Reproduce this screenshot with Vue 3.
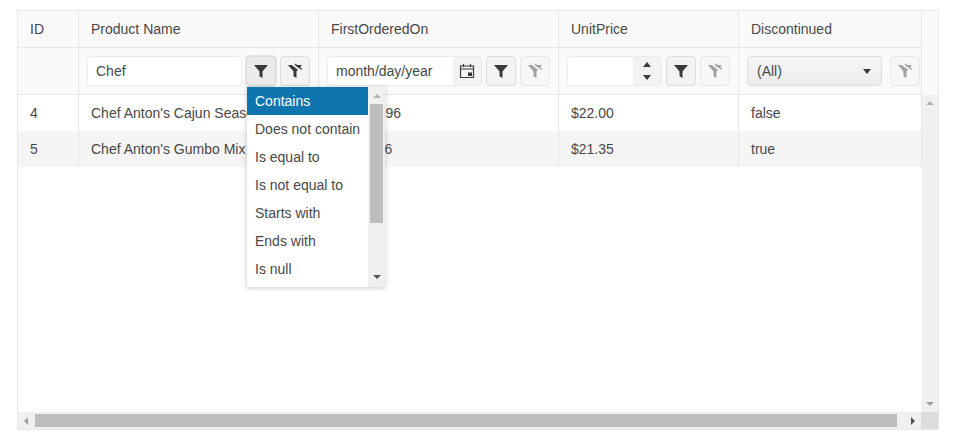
<script setup>
import { ref } from "vue";

const keyword = ref("Chef");
const dateMask = ref("month/day/year");
const price = ref("");

const rows = [
  { id: 4, name: "Chef Anton's Cajun Seasoning", date: "04/04/1996", price: "$22.00", discontinued: "false" },
  { id: 5, name: "Chef Anton's Gumbo Mix", date: "11/3/1996", price: "$21.35", discontinued: "true" },
];

const operators = ["Contains", "Does not contain", "Is equal to", "Is not equal to", "Starts with", "Ends with", "Is null"];
const filterPath = "M1 2h14l-5.500 6.500V15l-3-1.800V8.500z";
</script>

<template>
  <div class="grid">
    <div class="head">
      <div class="row">
        <div class="cell">ID</div>
        <div class="cell">Product Name</div>
        <div class="cell">FirstOrderedOn</div>
        <div class="cell">UnitPrice</div>
        <div class="cell">Discontinued</div>
      </div>
      <div class="row filters">
        <div class="cell"></div>
        <div class="cell tools">
          <input v-model="keyword" class="field text" />
          <button class="btn active">
            <svg viewBox="0 0 16 16" class="ico"><path :d="filterPath" /></svg>
          </button>
          <button class="btn">
            <svg viewBox="0 0 16 16" class="ico">
              <path :d="filterPath" />
              <path d="M4.500 0.500l10 8" class="gap" />
              <path d="M8 1l7 5.500" class="slash" />
            </svg>
          </button>
        </div>
        <div class="cell tools">
          <div class="group">
            <input v-model="dateMask" class="inner" />
            <span class="addon">
              <svg viewBox="0 0 16 16" class="cal">
                <path d="M1.500 3h13v11.500h-13z" class="cal-box" />
                <path d="M1.500 6h13" class="cal-box" />
                <path d="M4.500 1v3M11.500 1v3" class="cal-box" />
                <rect x="9" y="9.500" width="4" height="3.500" />
              </svg>
            </span>
          </div>
          <button class="btn">
            <svg viewBox="0 0 16 16" class="ico"><path :d="filterPath" /></svg>
          </button>
          <button class="btn off">
            <svg viewBox="0 0 16 16" class="ico">
              <path :d="filterPath" />
              <path d="M4.500 0.500l10 8" class="gap" />
              <path d="M8 1l7 5.500" class="slash" />
            </svg>
          </button>
        </div>
        <div class="cell tools">
          <div class="group num">
            <input v-model="price" class="inner" />
            <span class="spin">
              <i class="arrow up dark"></i>
              <i class="arrow down dark"></i>
            </span>
          </div>
          <button class="btn">
            <svg viewBox="0 0 16 16" class="ico"><path :d="filterPath" /></svg>
          </button>
          <button class="btn off">
            <svg viewBox="0 0 16 16" class="ico">
              <path :d="filterPath" />
              <path d="M4.500 0.500l10 8" class="gap" />
              <path d="M8 1l7 5.500" class="slash" />
            </svg>
          </button>
        </div>
        <div class="cell tools wide-gap">
          <div class="select">
            <span>(All)</span>
            <i class="arrow down dark big"></i>
          </div>
          <button class="btn off">
            <svg viewBox="0 0 16 16" class="ico">
              <path :d="filterPath" />
              <path d="M4.500 0.500l10 8" class="gap" />
              <path d="M8 1l7 5.500" class="slash" />
            </svg>
          </button>
        </div>
      </div>
    </div>

    <div class="middle">
      <div class="body">
        <div v-for="(item, i) in rows" :key="item.id" class="row data" :class="{ alt: i % 2 }">
          <div class="cell">{{ item.id }}</div>
          <div class="cell">{{ item.name }}</div>
          <div class="cell">{{ item.date }}</div>
          <div class="cell">{{ item.price }}</div>
          <div class="cell">{{ item.discontinued }}</div>
        </div>
      </div>
      <div class="vbar">
        <i class="arrow up light"></i>
        <i class="arrow down light"></i>
      </div>
    </div>

    <div class="hbar">
      <div class="htrack">
        <i class="arrow left"></i>
        <div class="hthumb"></div>
        <i class="arrow right"></i>
      </div>
      <div class="corner"></div>
    </div>

    <div class="menu">
      <ul>
        <li v-for="(op, i) in operators" :key="op" :class="{ selected: i === 0 }">{{ op }}</li>
      </ul>
      <div class="menu-bar">
        <i class="arrow up light"></i>
        <div class="menu-thumb"></div>
        <i class="arrow down mid"></i>
      </div>
    </div>
  </div>
</template>

<style>
body {
  background: #fff;
}
</style>

<style scoped>
.grid {
  position: relative;
  box-sizing: border-box;
  width: 922px;
  height: 420px;
  margin: 10px 0 0 17px;
  display: flex;
  flex-direction: column;
  border: 1px solid #e9e9e9;
  font: 14px/20px "Liberation Sans", Arial, sans-serif;
  color: #484848;
  background: #fff;
}
.head {
  background: #fafafa;
  width: 920px;
}
.row {
  display: grid;
  grid-template-columns: 61px 240px 240px 180px 183px;
  height: 37px;
  box-sizing: border-box;
  border-bottom: 1px solid #e7e7e7;
  width: 904px;
}
.row.filters {
  height: 47px;
}
.cell {
  box-sizing: border-box;
  border-right: 1px solid #e7e7e7;
  padding: 8px 12px;
  white-space: nowrap;
  overflow: hidden;
}
.tools {
  display: flex;
  gap: 4px;
  padding: 8px;
}
.wide-gap {
  gap: 8px;
  padding-right: 0;
}
.field,
.inner {
  box-sizing: border-box;
  font: inherit;
  color: inherit;
  outline: none;
  background: #fff;
  height: 30px;
}
.field {
  width: 155px;
  padding: 0 8px;
  border: 1px solid #ebebeb;
  border-radius: 4px;
}
.group {
  box-sizing: border-box;
  display: flex;
  width: 155px;
  height: 30px;
  border: 1px solid #ebebeb;
  border-radius: 4px;
  overflow: hidden;
  background: #f3f3f3;
}
.group.num {
  width: 95px;
}
.inner {
  border: 0;
  height: 28px;
  padding: 0 8px;
  width: 125px;
  min-width: 0;
}
.num .inner {
  width: 65px;
}
.addon {
  flex: 1;
  display: flex;
  align-items: center;
  justify-content: center;
}
.cal {
  width: 16px;
  height: 16px;
  fill: #333;
}
.cal-box {
  fill: none;
  stroke: #3d3d3d;
  stroke-width: 1.200;
}
.spin {
  flex: 1;
  display: flex;
  flex-direction: column;
  align-items: center;
  justify-content: center;
  gap: 8px;
}
.btn {
  box-sizing: border-box;
  flex: none;
  width: 30px;
  height: 30px;
  padding: 0;
  display: flex;
  align-items: center;
  justify-content: center;
  background: #f3f3f3;
  border: 1px solid #dcdcdc;
  border-radius: 4px;
}
.btn.active {
  background: #ebebeb;
  box-shadow: 0 0 0 1px #e4e4e4;
}
.btn.off {
  background: #f7f7f7;
  border-color: #e8e8e8;
}
.ico {
  width: 16px;
  height: 16px;
  fill: #3a3a3a;
}
.gap {
  fill: none;
  stroke: #f3f3f3;
  stroke-width: 1.800;
}
.slash {
  fill: none;
  stroke: #3a3a3a;
  stroke-width: 1.100;
}
.off .ico {
  fill: #a2a2a2;
}
.off .gap {
  stroke: #f7f7f7;
}
.off .slash {
  stroke: #a2a2a2;
}
.select {
  box-sizing: border-box;
  flex: none;
  width: 135px;
  height: 30px;
  padding: 0 10px 0 9px;
  display: flex;
  align-items: center;
  justify-content: space-between;
  border: 1px solid #dedede;
  border-radius: 4px;
  background: linear-gradient(#f6f6f6, #ececec);
}
.middle {
  flex: 1;
  display: flex;
  min-height: 0;
}
.body {
  width: 904px;
}
.data {
  height: 36px;
  border-bottom: 0;
}
.data.alt {
  background: #f5f5f5;
}
.vbar {
  width: 16px;
  background: #f0f0f0;
  display: flex;
  flex-direction: column;
  align-items: center;
  justify-content: space-between;
  padding: 6px 0;
  box-sizing: border-box;
}
.hbar {
  display: flex;
  flex: none;
  height: 17px;
}
.htrack {
  width: 903px;
  background: #f0f0f0;
  display: flex;
  align-items: center;
  padding-left: 6px;
  box-sizing: border-box;
}
.hthumb {
  width: 862px;
  height: 13px;
  margin: 0 14px 0 7px;
  background: #bdbdbd;
}
.corner {
  flex: 1;
  background: #dcdcdc;
}
.arrow {
  display: block;
  width: 0;
  height: 0;
  flex: none;
  border-style: solid;
  border-color: transparent;
}
.arrow.up {
  border-width: 0 4px 4px;
}
.arrow.down {
  border-width: 4px 4px 0;
}
.arrow.dark.up {
  border-bottom-color: #3a3a3a;
  border-width: 0 4px 5px;
}
.arrow.dark.down {
  border-top-color: #3a3a3a;
  border-width: 5px 4px 0;
}
.arrow.big {
  border-top-width: 6px;
}
.arrow.light.up {
  border-bottom-color: #b0b0b0;
}
.arrow.light.down {
  border-top-color: #a0a0a0;
}
.arrow.mid.down {
  border-top-color: #555;
}
.arrow.left {
  border-width: 4px 4px 4px 0;
  border-right-color: #a0a0a0;
}
.arrow.right {
  border-width: 4px 0 4px 4px;
  border-left-color: #505050;
}
.menu {
  position: absolute;
  left: 229px;
  top: 76px;
  width: 138px;
  height: 200px;
  display: flex;
  background: #fff;
  box-shadow: 0 1px 5px rgba(0, 0, 0, 0.22);
}
.menu ul {
  list-style: none;
  margin: 0;
  padding: 0;
  width: 121px;
}
.menu li {
  height: 28px;
  line-height: 28px;
  padding-left: 8px;
  white-space: nowrap;
}
.menu li.selected {
  background: #0f75ae;
  color: #fff;
}
.menu-bar {
  width: 17px;
  background: #f0f0f0;
  display: flex;
  flex-direction: column;
  align-items: center;
  padding-top: 7px;
  box-sizing: border-box;
}
.menu-thumb {
  width: 13px;
  height: 119px;
  margin-top: 6px;
  background: #bdbdbd;
}
.menu-bar .arrow.down {
  margin-top: 52px;
}
</style>
